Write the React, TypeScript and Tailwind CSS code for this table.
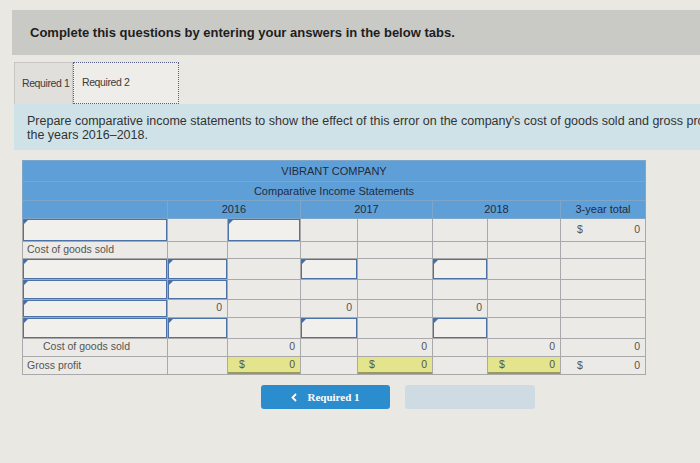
import React from "react";

// column widths: label, 2016a, 2016b, 2017a, 2017b, 2018a, 2018b, 3-year total
const cols = [145, 60, 73, 57, 75, 55, 73, 85];

// "" empty, "i" input, "0" number, "$" money, "$y" highlighted money, anything else is a label
const rows: { h: number; cells: string[] }[] = [
  { h: 23, cells: ["i", "", "i", "", "", "", "", "$"] },
  { h: 17, cells: ["Cost of goods sold", "", "", "", "", "", "", ""] },
  { h: 21, cells: ["i", "i", "", "i", "", "i", "", ""] },
  { h: 20, cells: ["i", "i", "", "", "", "", "", ""] },
  { h: 18, cells: ["i", "0", "", "0", "", "0", "", ""] },
  { h: 21, cells: ["i", "i", "", "i", "", "i", "", ""] },
  { h: 18, cells: [">Cost of goods sold", "", "0", "", "0", "", "0", "0"] },
  { h: 16, cells: ["Gross profit", "", "$y", "", "$y", "", "$y", "$"] },
];

function InputBox() {
  return (
    <div className="relative h-full w-full border-[1.5px] border-[#4d72a8] bg-[#f1f0ed]">
      <div className="absolute left-0 top-0 h-0 w-0 border-t-[4px] border-r-[4px] border-t-[#3f6fb0] border-r-transparent" />
    </div>
  );
}

function BodyCell({ v }: { v: string }) {
  if (v === "i") return <InputBox />;
  if (v === "0") return <div className="flex h-full items-center justify-end pr-[5px]">0</div>;
  if (v === "$")
    return (
      <div className="flex h-full items-center justify-between pl-[16px] pr-[5px]">
        <span>$</span>
        <span>0</span>
      </div>
    );
  if (v === "$y")
    return (
      <div className="flex h-full items-center justify-between border-b-[2px] border-b-[#9a9a60] bg-[#e4e48c] pl-[11px] pr-[5px]">
        <span>$</span>
        <span>0</span>
      </div>
    );
  if (v.startsWith(">")) return <div className="flex h-full items-center pl-[20px]">{v.slice(1)}</div>;
  if (v) return <div className="flex h-full items-center pl-[4px]">{v}</div>;
  return null;
}

export default function App() {
  return (
    <div
      className="relative h-[463px] w-[700px] overflow-hidden bg-[#e9e8e3] text-[#333]"
      style={{ fontFamily: '"Liberation Sans", Arial, sans-serif' }}
    >
      <div className="w-[820px] pl-[12px] pt-[10px]">
        {/* question header */}
        <div className="flex h-[45px] items-center bg-[#c9c9c6] pl-[18px] text-[13px] font-bold text-[#1e1e1e]">
          Complete this questions by entering your answers in the below tabs.
        </div>

        {/* tabs */}
        <div className="mt-[7px] ml-[2px] flex h-[42px] items-stretch">
          <div className="flex w-[59px] items-center border border-[#c6c5c1] border-b-0 bg-[#e0dfdb] pl-[7px] text-[10.5px] tracking-[-0.4px] text-[#3a3a3a]">
            Required 1
          </div>
          <div className="flex w-[106px] items-center border-[1.5px] border-dotted border-[#5a5f86] bg-[#eeede9] pl-[8px] text-[10.5px] tracking-[-0.4px] text-[#3a3a3a]">
            Required 2
          </div>
        </div>

        {/* instructions */}
        <div className="ml-[2px] h-[46px] bg-[#cfe2e8] pl-[13px] pt-[10px] text-[12.5px] leading-[14px] text-[#333]">
          Prepare comparative income statements to show the effect of this error on the company's cost of goods sold and gross profit for
          <br />
          the years 2016–2018.
        </div>

        {/* table */}
        <table className="ml-[10px] mt-[10px] border-collapse text-[10.5px] text-[#555]" style={{ tableLayout: "fixed" }}>
          <colgroup>
            {cols.map((w, i) => (
              <col key={i} style={{ width: w }} />
            ))}
          </colgroup>
          <thead className="text-[11px] text-[#1f2b3f]">
            <tr className="h-[21px] bg-[#5f9fd8]">
              <th colSpan={8} className="border border-[#7fa6c9] font-normal">
                VIBRANT COMPANY
              </th>
            </tr>
            <tr className="h-[19px] bg-[#5f9fd8]">
              <th colSpan={8} className="border border-[#7fa6c9] font-normal">
                Comparative Income Statements
              </th>
            </tr>
            <tr className="h-[17px] bg-[#5f9fd8]">
              <th className="border border-[#7fa6c9]" />
              <th colSpan={2} className="border border-[#7fa6c9] font-normal">2016</th>
              <th colSpan={2} className="border border-[#7fa6c9] font-normal">2017</th>
              <th colSpan={2} className="border border-[#7fa6c9] font-normal">2018</th>
              <th className="border border-[#7fa6c9] font-normal">3-year total</th>
            </tr>
          </thead>
          <tbody>
            {rows.map((r, ri) => (
              <tr key={ri} style={{ height: r.h }}>
                {r.cells.map((c, ci) => (
                  <td key={ci} className="border border-[#a7a9ab] bg-[#ebeae6] p-0 align-middle" style={{ height: r.h }}>
                    <BodyCell v={c} />
                  </td>
                ))}
              </tr>
            ))}
          </tbody>
        </table>

        {/* navigation buttons */}
        <div className="mt-[10px] ml-[249px] flex gap-[15px]">
          <button
            className="flex h-[24px] w-[129px] items-center justify-center gap-[10px] rounded-[3px] bg-[#2b8dcd] text-[11px] font-bold text-white"
            style={{ fontFamily: '"Liberation Serif", "Times New Roman", serif' }}
          >
            <svg width="6" height="9" viewBox="0 0 6 9" fill="none">
              <path d="M5 1 L1.5 4.5 L5 8" stroke="white" strokeWidth="1.8" />
            </svg>
            <span>Required 1</span>
          </button>
          <div className="h-[24px] w-[130px] rounded-[3px] bg-[#cfdbe3]" />
        </div>
      </div>
    </div>
  );
}
